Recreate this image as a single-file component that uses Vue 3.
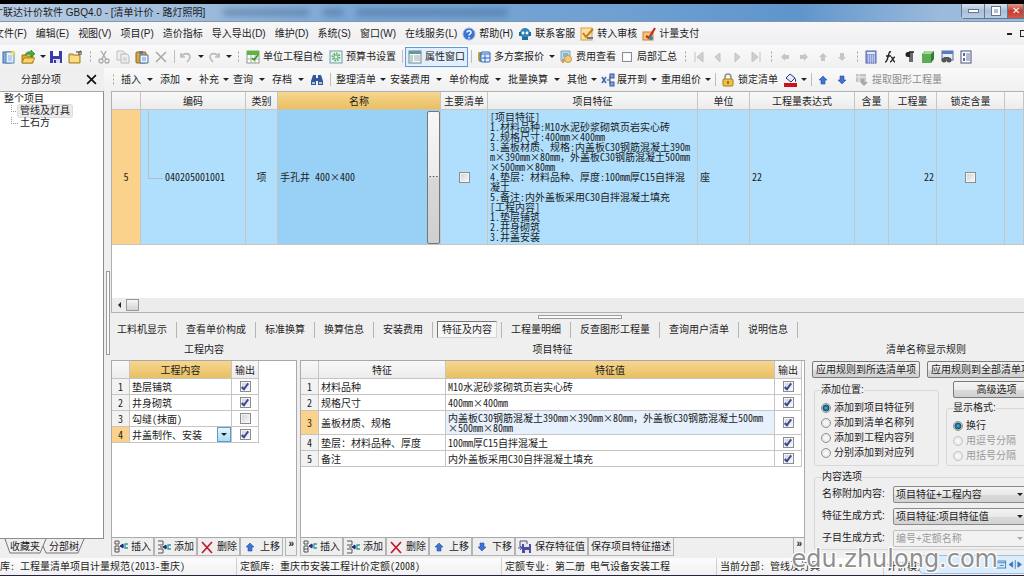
<template>
  <div class="app">
    <!-- 图标库 -->
    <svg class="sprite" aria-hidden="true">
      <symbol id="i-new" viewBox="0 0 14 14"><rect x="1" y="2" width="8" height="11" fill="#7fb0e0" stroke="#3f6da8" /><rect x="4" y="2" width="8" height="11" fill="#e4f0fb" stroke="#5b84b8" /><path d="M6 6h4M6 8h4M6 10h4" stroke="#8fb2d8" /><path d="M11 0l1 2 2 1-2 1-1 2-1-2-2-1 2-1z" fill="#f5d94e" /></symbol>
      <symbol id="i-open" viewBox="0 0 14 14"><path d="M1 5h4l1 1h6v7H1z" fill="#e0a82e" stroke="#a87716" /><path d="M3 8h11l-3 5H1z" fill="#f8d66c" stroke="#b3851d" /><path d="M4 5c1-3 4-4 6-3V0l4 4-4 3V5C8 4 6 4 4 5z" fill="#3fae3a" stroke="#23791f" stroke-width=".6" /></symbol>
      <symbol id="i-save" viewBox="0 0 14 14"><path d="M1 1h12v12H1z" fill="#3a3aa8" /><path d="M4 1h6v5H4z" fill="#fff" /><path d="M4 9h7v4H4z" fill="#dcdcf0" /><path d="M5 10h2v3H5z" fill="#3a3aa8" /></symbol>
      <symbol id="i-folder" viewBox="0 0 14 14"><path d="M1 4h4l1 1h6v8H1z" fill="#efc34f" stroke="#a5802a" /><path d="M2 6h9v6H2z" fill="#f9dc86" /><path d="M8 2h3v3M11 2l2-1v4" stroke="#333" fill="none" /></symbol>
      <symbol id="i-cut" viewBox="0 0 14 14"><path d="M4 1l5 8M9 1L5 9" stroke="#aaa" stroke-width="1.4" /><circle cx="4" cy="11" r="2" fill="none" stroke="#aaa" stroke-width="1.3" /><circle cx="10" cy="11" r="2" fill="none" stroke="#aaa" stroke-width="1.3" /></symbol>
      <symbol id="i-copy" viewBox="0 0 14 14"><path d="M1 1h6l2 2v7H1z" fill="#eee" stroke="#c0c0c0" /><path d="M5 4h6l2 2v7H5z" fill="#eee" stroke="#b8b8b8" /><path d="M7 8h4M7 10h4" stroke="#c4c4c4" /></symbol>
      <symbol id="i-paste" viewBox="0 0 14 14"><rect x="1" y="2" width="10" height="11" rx="1" fill="#d9a53c" stroke="#8c6a1e" /><rect x="4" y="1" width="4" height="3" fill="#777" /><path d="M5 5h8v8H5z" fill="#eaf2fc" stroke="#4a6fa8" /><path d="M7 8h4M7 10h4" stroke="#6e95cc" /></symbol>
      <symbol id="i-delgray" viewBox="0 0 14 14"><path d="M2 2l10 10M12 2L2 12" stroke="#a8a8a8" stroke-width="1.5" /></symbol>
      <symbol id="i-undo" viewBox="0 0 14 14"><path d="M2 3v4h4M2 7c3-5 9-4 9 0 0 2-1 3-3 5" fill="none" stroke="#bcbcbc" stroke-width="1.6" /></symbol>
      <symbol id="i-redo" viewBox="0 0 14 14"><path d="M12 3v4H8M12 7C9 2 3 3 3 7c0 2 1 3 3 5" fill="none" stroke="#bcbcbc" stroke-width="1.6" /></symbol>
      <symbol id="i-check" viewBox="0 0 14 14"><rect x="1" y="1" width="12" height="12" fill="#fff" stroke="#8a9a8a" /><path d="M1 1h12v4H1z" fill="#5fb53c" /><path d="M1 9h12M5 5v8M9 5v8" stroke="#9fb09f" /><path d="M6 8l2 2 4-5" fill="none" stroke="#2f8c1e" stroke-width="1.5" /></symbol>
      <symbol id="i-setting" viewBox="0 0 14 14"><rect x="1" y="1" width="12" height="12" fill="#e4f4ec" stroke="#6b9fb0" /><circle cx="7" cy="7" r="3.4" fill="none" stroke="#62b06a" stroke-width="2" stroke-dasharray="1.6 1" /><circle cx="7" cy="7" r="2" fill="none" stroke="#62b06a" /></symbol>
      <symbol id="i-prop" viewBox="0 0 14 14"><rect x="1" y="1" width="12" height="12" fill="#fff" stroke="#6f8494" /><path d="M1 1h12v3H1z" fill="#5c9aa8" /><path d="M2 5h3v7H2z" fill="#b9d8c4" /><path d="M6 6h6M6 8h6M6 10h6" stroke="#9aa8b0" /></symbol>
      <symbol id="i-multi" viewBox="0 0 14 14"><rect x="1" y="2" width="8" height="9" rx="1" fill="#e98f5a" /><rect x="2" y="3" width="9" height="9" rx="1" fill="#67b05a" /><rect x="4" y="2" width="9" height="10" rx="1" fill="#e6effb" stroke="#2f62c0" /><path d="M4 4h9M8 5v7M5 8h8" stroke="#2f62c0" /></symbol>
      <symbol id="i-fee" viewBox="0 0 14 14"><path d="M2 1h9v10H2z" fill="#b9d8ea" stroke="#7ea5bb" /><path d="M4 4h5M4 6h5" stroke="#5d8fb0" /><circle cx="9" cy="9" r="3.5" fill="#f1cd84" stroke="#c49a43" /><path d="M3 9h2v4H3z" fill="#d99b4b" /></symbol>
      <symbol id="i-first" viewBox="0 0 14 14"><path d="M3 2v10M11 2L5 7l6 5z" fill="#cfcfcf" stroke="#c2c2c2" /></symbol>
      <symbol id="i-prev" viewBox="0 0 14 14"><path d="M9 3L4 7l5 5z" fill="#cfcfcf" stroke="#c2c2c2" /></symbol>
      <symbol id="i-next" viewBox="0 0 14 14"><path d="M5 3l5 4-5 5z" fill="#cfcfcf" stroke="#c2c2c2" /></symbol>
      <symbol id="i-last" viewBox="0 0 14 14"><path d="M11 2v10M3 2l6 5-6 5z" fill="#cfcfcf" stroke="#c2c2c2" /></symbol>
      <symbol id="i-gleft" viewBox="0 0 14 14"><path d="M3 7l4-4v2h4v4H7v2z" fill="#c6c6c6" /></symbol>
      <symbol id="i-gright" viewBox="0 0 14 14"><path d="M11 7L7 3v2H3v4h4v2z" fill="#c6c6c6" /></symbol>
      <symbol id="i-gup" viewBox="0 0 14 14"><path d="M7 3l4 4H9v4H5V7H3z" fill="#c6c6c6" /></symbol>
      <symbol id="i-gdown" viewBox="0 0 14 14"><path d="M7 11l4-4H9V3H5v4H3z" fill="#c6c6c6" /></symbol>
      <symbol id="i-calc" viewBox="0 0 14 14"><rect x="2" y="1" width="10" height="12" fill="#8f9ddb" stroke="#5a67a8" /><path d="M3 2h8v2H3z" fill="#e3e8ff" /><path d="M4 6h7M4 8h7M4 10h7M4 12h7" stroke="#e9ecff" stroke-dasharray="1 1" /></symbol>
      <symbol id="i-fx" viewBox="0 0 14 14"><path d="M8 2c-2-1-2 2-3 5s-1 5-3 5M3 6h5M8 7c2 0 2 5 4 5M12 7c-2 0-3 5-5 5" fill="none" stroke="#222" stroke-width="1.4" /></symbol>
      <symbol id="i-para" viewBox="0 0 14 14"><path d="M7 2h5M8 2v10M10 2v10" stroke="#222" stroke-width="1.3" /><path d="M8 2H6a2.500 2.500 0 0 0 0 5h2z" fill="#222" /></symbol>
      <symbol id="i-cube" viewBox="0 0 14 14"><path d="M1 4l3-3h9v8l-3 4H1z" fill="#2f7d35" /><path d="M1 4h9v9H1z" fill="#5cab56" /><path d="M1 4l3-3h9l-3 3z" fill="#a3d79a" /></symbol>
      <symbol id="i-find" viewBox="0 0 14 14"><rect x="2" y="1" width="11" height="9" fill="#e8ecf8" stroke="#5b6ea8" /><path d="M2 1h11v3H2z" fill="#5b7ac4" /><circle cx="4" cy="10" r="2.500" fill="#555" /><circle cx="9" cy="10" r="2.500" fill="#555" /><path d="M4 8h5" stroke="#555" stroke-width="2" /></symbol>
      <symbol id="i-grid" viewBox="0 0 14 14"><rect x="2" y="1" width="10" height="12" fill="#fff" stroke="#4a5178" /><path d="M4 3h2v3H4zM4 8h2v3H4z" fill="#5d66a8" /><path d="M7 4h4M7 6h4M7 8h4M7 10h4" stroke="#6b74a8" /></symbol>
      <symbol id="i-binoc" viewBox="0 0 14 14"><path d="M3 2h3v3h2V2h3l2 6v4H8V8H6v4H1V8z" fill="#35569e" /><path d="M2 9h3v2H2zM9 9h3v2H9z" fill="#a8c2ee" /></symbol>
      <symbol id="i-expand" viewBox="0 0 14 14"><path d="M1 4l4 6M5 4L1 10" stroke="#3b6cc0" stroke-width="1.6" /><path d="M6 7h3M9 3v8" stroke="#444" /><rect x="9" y="1" width="4" height="4" fill="#7fa5e4" stroke="#3556a0" /><rect x="9" y="9" width="4" height="4" fill="#7fa5e4" stroke="#3556a0" /></symbol>
      <symbol id="i-lock" viewBox="0 0 14 14"><path d="M4 7V4a3 3 0 0 1 6 0v3" fill="none" stroke="#8f8f8f" stroke-width="1.500" /><rect x="2" y="6" width="10" height="7" rx="1" fill="#f0c04a" stroke="#a87f1d" /><path d="M7 8v3" stroke="#7d5d12" stroke-width="1.500" /></symbol>
      <symbol id="i-fill" viewBox="0 0 14 14"><path d="M3 5l4-4 5 4-4 4z" fill="#e8ecf8" stroke="#223a80" /><path d="M12 5c2 2 1 4 0 4z" fill="#223a80" /><path d="M1 10h13v4H1z" fill="#d01018" /></symbol>
      <symbol id="i-up" viewBox="0 0 14 14"><path d="M7 3l4 4H9v4H5V7H3z" fill="#3f72d8" stroke="#284f9f" stroke-width=".6" /></symbol>
      <symbol id="i-down" viewBox="0 0 14 14"><path d="M7 11l4-4H9V3H5v4H3z" fill="#3f72d8" stroke="#284f9f" stroke-width=".6" /></symbol>
      <symbol id="i-extract" viewBox="0 0 14 14"><path d="M1 1h10v8H1z" fill="#c4c4c4" /><path d="M1 4h10M4 1v8" stroke="#eee" /><path d="M6 6h3v3h4l-4 4-4-4h1z" fill="#a8a8a8" /></symbol>
      <symbol id="i-help" viewBox="0 0 14 14"><circle cx="7" cy="7" r="6" fill="#3e73cf" stroke="#94b5ea" /><path d="M5 5.500C5 3 9 3 9 5.500 9 7 7 7 7 8.500M7 10v1.500" fill="none" stroke="#fff" stroke-width="1.500" /></symbol>
      <symbol id="i-service" viewBox="0 0 14 14"><circle cx="7" cy="6" r="5" fill="#2f86b8" /><path d="M1 5h2v4H1zM11 5h2v4h-2zM4 10h6v3H4z" fill="#1f6d9c" /><circle cx="5" cy="6" r="1.400" fill="#fff" /><circle cx="9" cy="6" r="1.400" fill="#fff" /></symbol>
      <symbol id="i-audit" viewBox="0 0 14 14"><rect x="1" y="1" width="11" height="12" fill="#fbe2a2" stroke="#d9a13c" /><path d="M3 6l3 4 7-8" fill="none" stroke="#c87a1d" stroke-width="2" /><path d="M7 11h6" stroke="#557fb5" stroke-width="2" /></symbol>
      <symbol id="i-pay" viewBox="0 0 14 14"><rect x="1" y="5" width="10" height="8" fill="#f3c577" stroke="#c4862f" /><path d="M4 9l3 2 6-10" fill="none" stroke="#c32b23" stroke-width="2.200" /><circle cx="9" cy="11" r="2" fill="#3a82a8" /></symbol>
      <symbol id="i-insert" viewBox="0 0 14 14"><path d="M1 1h4v3H1zM1 6h4v6H1zM1 9h4" fill="none" stroke="#555" /><path d="M6 6l3-2v4zM8 6h2" fill="#1d2a80" stroke="#1d2a80" /><path d="M14 4h-3v4h3" fill="none" stroke="#2a9a98" stroke-width="1.300" /></symbol>
      <symbol id="i-append" viewBox="0 0 14 14"><path d="M1 1h5v4H1M1 9h5v4H1M6 7H3" fill="none" stroke="#555" /><path d="M6 7l3-2v4zM8 7h2" fill="#1d2a80" stroke="#1d2a80" /><path d="M14 5h-3v4h3" fill="none" stroke="#2a9a98" stroke-width="1.300" /></symbol>
      <symbol id="i-delete" viewBox="0 0 14 14"><path d="M2 2l10 11M12 2L2 13" stroke="#c01a2c" stroke-width="1.700" /></symbol>
      <symbol id="i-savefile" viewBox="0 0 14 14"><path d="M2 1h7v6H2z" fill="#e8e8f4" stroke="#556" /><path d="M4 4h9v9H4z" fill="#4d4d9e" /><path d="M6 4h5v3H6zM7 10h4v3H7z" fill="#e4e4f4" /><path d="M0 8h4M2 6l2 2-2 2" stroke="#335fb0" fill="none" /></symbol>
    </svg>

    <header class="titlebar">
      <h1 class="title">广联达计价软件 GBQ4.0 - [清单计价 - 路灯照明]</h1>
      <div class="glass"><i class="smudge"></i><i class="smudge short"></i><i class="smudge long"></i></div>
      <div class="win-btns">
        <button type="button" class="win-btn" aria-label="最小化"><span class="win-min"></span></button>
        <button type="button" class="win-btn" aria-label="还原"><span class="win-max"></span></button>
        <button type="button" class="win-btn win-close" aria-label="关闭">✕</button>
      </div>
    </header>

    <nav class="menubar">
      <button v-for="m in menus" :key="m.text" type="button" class="menu">
        <svg v-if="m.icon" class="ico"><use :href="'#i-' + m.icon" /></svg>{{ m.text }}
      </button>
      <span class="mdi"><span class="mdi-min"></span><span class="mdi-max"></span></span>
    </nav>

    <div class="toolbar">
      <template v-for="(t, i) in mainTools" :key="i">
        <span v-if="t.kind === 'grip'" class="grip"></span>
        <span v-else-if="t.kind === 'sep'" class="sep"></span>
        <label v-else-if="t.kind === 'check'" class="tool-check"><input type="checkbox" class="box light">{{ t.text }}</label>
        <button v-else type="button" :class="['tool', { 'icon-only': !t.text, active: t.active }]" :aria-label="t.text || t.icon">
          <svg v-if="t.icon" class="ico"><use :href="'#i-' + t.icon" /></svg>{{ t.text }}<span v-if="t.caret" class="caret"></span>
        </button>
      </template>
    </div>

    <div class="body">
      <aside class="side">
        <div class="side-head">
          <h2>分部分项</h2>
          <button type="button" class="side-close" aria-label="关闭面板">
            <svg viewBox="0 0 10 10"><path d="M1 1l8 8M9 1L1 9" stroke="#111" stroke-width="1.500" /></svg>
          </button>
        </div>
        <ul class="tree">
          <li>整个项目
            <ul>
              <li><span class="node selected">管线及灯具</span></li>
              <li><span class="node">土石方</span></li>
            </ul>
          </li>
        </ul>
        <div class="side-tabs">
          <svg class="side-tabs-line" viewBox="0 0 90 15"><path d="M5 0l5 14h30l6-14M43 7l3 7h32L84 0" fill="none" stroke="#777" /></svg>
          <button type="button">收藏夹</button>
          <button type="button">分部树</button>
        </div>
      </aside>

      <main class="work">
        <div class="toolbar sub">
          <template v-for="(t, i) in subTools" :key="i">
            <span v-if="t.kind === 'grip'" class="grip"></span>
            <span v-else-if="t.kind === 'sep'" class="sep"></span>
            <button v-else type="button" :class="['tool', { 'icon-only': !t.text, gray: t.gray }]" :aria-label="t.text || t.icon">
              <svg v-if="t.icon" class="ico"><use :href="'#i-' + t.icon" /></svg>{{ t.text }}<span v-if="t.caret" :class="['caret', { wide: t.wide }]"></span>
            </button>
          </template>
        </div>

        <div class="content">
          <div class="splitter"><span class="splitter-grip"></span></div>
          <div class="panes">
            <section class="bill">
              <table class="grid bill-grid">
                <colgroup>
                  <col class="w-no"><col class="w-code"><col class="w-kind"><col class="w-name"><col class="w-main"><col class="w-feat">
                  <col class="w-unit"><col class="w-expr"><col class="w-cont"><col class="w-qty"><col class="w-lock"><col>
                </colgroup>
                <thead>
                  <tr><th v-for="(h, i) in billHeads" :key="i" :class="{ hot: h === '名称' }">{{ h }}</th></tr>
                </thead>
                <tbody>
                  <tr>
                    <td class="no hot">5</td>
                    <td class="code"><div class="branch"><span class="branch-line"></span><span>040205001001</span></div></td>
                    <td class="center">项</td>
                    <td class="name"><div class="edit"><span>手孔井 400×400</span><button type="button" aria-label="编辑名称">⋯</button></div></td>
                    <td class="center"><input type="checkbox" class="box" aria-label="主要清单"></td>
                    <td class="feature"><template v-for="(s, i) in featureText.split('，')" :key="i"><span v-if="i" class="full">，</span>{{ s }}</template></td>
                    <td>座</td>
                    <td>22</td>
                    <td></td>
                    <td class="right">22</td>
                    <td class="center"><input type="checkbox" class="box" aria-label="锁定含量"></td>
                    <td></td>
                  </tr>
                </tbody>
              </table>
              <div class="hscroll"><span class="hscroll-arrow"></span><span class="hscroll-thumb"></span></div>
            </section>

            <div class="hsplit"><span class="hsplit-grip"></span></div>

            <div class="tabs">
              <div v-for="t in tabs" :key="t" class="tab-cell">
                <button type="button" :class="['tab', { active: t === activeTab }]" @click="activeTab = t">{{ t }}</button>
              </div>
            </div>

            <div class="details">
              <section class="panel">
                <h3>工程内容</h3>
                <div class="table-box">
                  <table class="grid content-grid">
                    <colgroup><col class="w-idx"><col><col class="w-out"></colgroup>
                    <thead><tr><th></th><th class="hot">工程内容</th><th>输出</th></tr></thead>
                    <tbody>
                      <tr v-for="(r, i) in works" :key="r.text">
                        <td :class="['no', { hot: i === 3 }]">{{ i + 1 }}</td>
                        <td><div class="combo"><span>{{ r.text }}</span><button v-if="i === 3" type="button" aria-label="展开列表"><i class="caret-tip"></i></button></div></td>
                        <td class="center out"><input v-model="r.out" type="checkbox" class="box" :aria-label="r.text"></td>
                      </tr>
                    </tbody>
                  </table>
                </div>
                <div class="actions">
                  <button v-for="a in actions.slice(0, 4)" :key="a.text" type="button"><svg class="ico"><use :href="'#i-' + a.icon" /></svg>{{ a.text }}</button>
                  <button type="button" class="more" aria-label="更多">»</button>
                </div>
              </section>

              <section class="panel">
                <h3>项目特征</h3>
                <div class="table-box">
                  <table class="grid feature-grid">
                    <colgroup><col class="w-idx"><col class="w-key"><col><col class="w-out"></colgroup>
                    <thead><tr><th></th><th>特征</th><th class="hot">特征值</th><th>输出</th></tr></thead>
                    <tbody>
                      <tr v-for="(f, i) in features" :key="f.name" :class="{ current: i === 2 }">
                        <td :class="['no', { hot: i === 2 }]">{{ i + 1 }}</td>
                        <td>{{ f.name }}</td>
                        <td class="value"><template v-for="(s, j) in f.value.split('，')" :key="j"><span v-if="j" class="full">，</span>{{ s }}</template></td>
                        <td class="center out"><input v-model="f.out" type="checkbox" class="box" :aria-label="f.name"></td>
                      </tr>
                    </tbody>
                  </table>
                </div>
                <div class="actions">
                  <button v-for="a in actions" :key="a.text" type="button"><svg v-if="a.icon" class="ico"><use :href="'#i-' + a.icon" /></svg>{{ a.text }}</button>
                  <button type="button" class="more" aria-label="更多">»</button>
                </div>
              </section>

              <section class="rules">
                <h3>清单名称显示规则</h3>
                <div class="rules-btns">
                  <button type="button" class="btn">应用规则到所选清单项</button>
                  <button type="button" class="btn">应用规则到全部清单项</button>
                </div>
                <div class="rules-cols">
                  <fieldset>
                    <legend>添加位置:</legend>
                    <label v-for="p in positions" :key="p" class="radio"><input v-model="position" type="radio" name="position" :value="p">{{ p }}</label>
                  </fieldset>
                  <div class="format">
                    <button type="button" class="btn">高级选项</button>
                    <fieldset>
                      <legend>显示格式:</legend>
                      <label class="radio"><input type="radio" name="format" checked>换行</label>
                      <label class="radio disabled"><input type="radio" name="format" disabled>用逗号分隔</label>
                      <label class="radio disabled"><input type="radio" name="format" disabled>用括号分隔</label>
                    </fieldset>
                  </div>
                </div>
                <fieldset class="options">
                  <legend>内容选项</legend>
                  <div v-for="o in options" :key="o.label" class="option">
                    <label :for="o.id">{{ o.label }}</label>
                    <div :class="['select', { disabled: o.disabled }]">
                      <select :id="o.id" :disabled="o.disabled"><option>{{ o.value }}</option></select>
                      <i class="caret-tip"></i>
                    </div>
                  </div>
                </fieldset>
              </section>
            </div>
          </div>
        </div>
      </main>
    </div>

    <footer class="status">
      <span class="s-lib">库: 工程量清单项目计量规范(2013-重庆)</span>
      <span class="s-quota">定额库: 重庆市安装工程计价定额(2008)</span>
      <span class="s-major">定额专业: 第二册 电气设备安装工程</span>
      <span class="s-part">当前分部: 管线及灯具</span>
      <span class="s-mode">计价模式</span>
    </footer>
    <div class="langbar">
      <svg viewBox="0 0 32 12"><rect x="1" y="2" width="10" height="8" fill="none" stroke="#3a78b8" /><path d="M1 4h10M4 7h5" stroke="#3a78b8" /><path d="M22 1v10M15 6l4-3v6zM29 6l-4-3v6z" fill="#3a78b8" stroke="#3a78b8" /></svg>
    </div>
    <div class="watermark">edu.zhulong.com</div>
  </div>
</template>

<script setup>
import { ref } from 'vue'

const grip = { kind: 'grip' }
const sep = { kind: 'sep' }

const menus = [
  { text: '文件(F)' },
  { text: '编辑(E)' },
  { text: '视图(V)' },
  { text: '项目(P)' },
  { text: '造价指标' },
  { text: '导入导出(D)' },
  { text: '维护(D)' },
  { text: '系统(S)' },
  { text: '窗口(W)' },
  { text: '在线服务(L)' },
  { text: '帮助(H)', icon: 'help' },
  { text: '联系客服', icon: 'service' },
  { text: '转入审核', icon: 'audit' },
  { text: '计量支付', icon: 'pay' }
]

const mainTools = [
  { icon: 'new' }, { icon: 'open', caret: true }, { icon: 'save' }, { icon: 'folder' },
  grip,
  { icon: 'cut' }, { icon: 'copy' }, { icon: 'paste' }, { icon: 'delgray' },
  sep,
  { icon: 'undo', caret: true }, { icon: 'redo', caret: true },
  grip,
  { icon: 'check', text: '单位工程自检' },
  { icon: 'setting', text: '预算书设置' },
  sep,
  { icon: 'prop', text: '属性窗口', active: true },
  sep,
  { icon: 'multi', text: '多方案报价', caret: true },
  { icon: 'fee', text: '费用查看' },
  { kind: 'check', text: '局部汇总' },
  grip,
  { icon: 'first' }, { icon: 'prev' }, { icon: 'next' }, { icon: 'last' },
  grip,
  { icon: 'gleft' }, { icon: 'gright' }, { icon: 'gup' }, { icon: 'gdown' },
  grip,
  { icon: 'calc' }, { icon: 'fx' }, { icon: 'para' }, { icon: 'cube' }, { icon: 'find' }, { icon: 'grid' }
]

const subTools = [
  grip,
  { text: '插入', caret: true, wide: true },
  { text: '添加', caret: true, wide: true },
  { text: '补充', caret: true },
  { text: '查询', caret: true, wide: true },
  { text: '存档', caret: true, wide: true },
  { icon: 'binoc' },
  sep,
  { text: '整理清单', caret: true },
  { text: '安装费用', caret: true, wide: true },
  { text: '单价构成', caret: true, wide: true },
  { text: '批量换算', caret: true, wide: true },
  { text: '其他', caret: true },
  { icon: 'expand', text: '展开到', caret: true },
  { text: '重用组价', caret: true },
  sep,
  { icon: 'lock', text: '锁定清单' },
  { icon: 'fill', caret: true },
  sep,
  { icon: 'up' }, { icon: 'down' },
  { icon: 'extract', text: '提取图形工程量', gray: true }
]

const billHeads = ['', '编码', '类别', '名称', '主要清单', '项目特征', '单位', '工程量表达式', '含量', '工程量', '锁定含量', '']

const featureText = [
  '[项目特征]',
  '1.材料品种:M10水泥砂浆砌筑页岩实心砖',
  '2.规格尺寸:400mm×400mm',
  '3.盖板材质、规格:内盖板C30钢筋混凝土390m',
  'm×390mm×80mm，外盖板C30钢筋混凝土500mm',
  '×500mm×80mm',
  '4.垫层：材料品种、厚度:100mm厚C15自拌混',
  '凝土',
  '5.备注:内外盖板采用C30自拌混凝土填充',
  '[工程内容]',
  '1.垫层铺筑',
  '2.井身砌筑',
  '3.井盖安装'
].join('\n')

const tabs = ['工料机显示', '查看单价构成', '标准换算', '换算信息', '安装费用', '特征及内容', '工程量明细', '反查图形工程量', '查询用户清单', '说明信息']
const activeTab = ref('特征及内容')

const works = ref([
  { text: '垫层铺筑', out: true },
  { text: '井身砌筑', out: true },
  { text: '勾缝(抹面)', out: false },
  { text: '井盖制作、安装', out: true }
])

const features = ref([
  { name: '材料品种', value: 'M10水泥砂浆砌筑页岩实心砖', out: true },
  { name: '规格尺寸', value: '400mm×400mm', out: true },
  { name: '盖板材质、规格', value: '内盖板C30钢筋混凝土390mm×390mm×80mm，外盖板C30钢筋混凝土500mm\n×500mm×80mm', out: true },
  { name: '垫层：材料品种、厚度', value: '100mm厚C15自拌混凝土', out: true },
  { name: '备注', value: '内外盖板采用C30自拌混凝土填充', out: true }
])

const actions = [
  { icon: 'insert', text: '插入' },
  { icon: 'append', text: '添加' },
  { icon: 'delete', text: '删除' },
  { icon: 'up', text: '上移' },
  { icon: 'down', text: '下移' },
  { icon: 'savefile', text: '保存特征值' },
  { text: '保存项目特征描述' }
]

const positions = ['添加到项目特征列', '添加到清单名称列', '添加到工程内容列', '分别添加到对应列']
const position = ref('添加到项目特征列')

const options = [
  { id: 'opt-name', label: '名称附加内容:', value: '项目特征+工程内容' },
  { id: 'opt-feature', label: '特征生成方式:', value: '项目特征:项目特征值' },
  { id: 'opt-sub', label: '子目生成方式:', value: '编号+定额名称', disabled: true }
]
</script>

<style>
body {
  margin: 0;
  overflow-x: hidden;
}
</style>

<style scoped>
.app {
  position: relative;
  display: flex;
  flex-direction: column;
  min-height: 100vh;
  box-sizing: border-box;
  overflow: hidden;
  border-top: 4px solid #000;
  border-bottom: 1px solid #23233c;
  background: #f0eff0;
  color: #1c1c1c;
  font-family: "Liberation Sans", "Noto Sans CJK SC", sans-serif;
  font-size: 10px;
  line-height: 12px;
}

.sprite {
  position: absolute;
  width: 0;
  height: 0;
}

button {
  font: inherit;
  color: inherit;
  padding: 0;
  border: none;
  background: none;
  white-space: nowrap;
}

h1, h2, h3 {
  margin: 0;
  font-size: 10px;
  font-weight: normal;
}

.ico {
  width: 14px;
  height: 14px;
  flex: none;
}

/* 标题栏 */
.titlebar {
  display: flex;
  align-items: center;
  height: 18px;
  box-sizing: border-box;
  border-bottom: 1px solid #8297ad;
  background: linear-gradient(90deg, #b9cde3 0, #9fbddc 18%, #79a6d4 35%, #6fa0d2 60%, #5f95cc 78%, #9cbbdc 92%);
}

.title {
  margin-left: -7px;
  white-space: nowrap;
}

.glass {
  flex: 1;
  display: flex;
  gap: 14px;
  padding-left: 18px;
}

.smudge {
  width: 86px;
  height: 7px;
  background: #3b5f88;
  opacity: 0.45;
  filter: blur(3px);
}

.smudge.short {
  width: 20px;
}

.smudge.long {
  width: 150px;
}

.win-btns {
  display: flex;
  align-self: flex-start;
  height: 14px;
  border: 1px solid #5f7792;
  border-top: none;
  border-right: none;
  border-radius: 0 0 0 4px;
}

.win-btn {
  display: flex;
  align-items: center;
  justify-content: center;
  width: 23px;
  border-right: 1px solid #5f7792;
  background: linear-gradient(#d6e2ef, #a9bfd6 50%, #b9cde0);
}

.win-min {
  width: 9px;
  height: 2px;
  border: 1px solid #65758a;
  background: #fff;
}

.win-max {
  width: 4px;
  height: 4px;
  border: 2px solid #fff;
  outline: 1px solid #65758a;
}

.win-close {
  width: 16px;
  color: #fff;
  background: linear-gradient(#e09a90, #c83a2c 50%, #d25a48);
}

/* 菜单栏 */
.menubar {
  display: flex;
  align-items: center;
  gap: 9px;
  height: 23px;
  background: linear-gradient(#f7f7f8, #efeff1);
}

.menu {
  display: flex;
  align-items: center;
  gap: 3px;
}

.menu:first-child {
  margin-left: -6px;
}

.menu:has(.ico) {
  margin-left: -4px;
}

.mdi {
  display: flex;
  align-items: center;
  gap: 8px;
  margin-left: auto;
}

.mdi-min {
  width: 5px;
  height: 2px;
  background: #222;
}

.mdi-max {
  width: 3px;
  height: 5px;
  border: 1px solid #222;
  border-right: none;
}

/* 工具栏 */
.toolbar {
  display: flex;
  align-items: center;
  height: 23px;
  background: linear-gradient(#fafafa, #f0f0f1);
}

.toolbar.sub {
  padding-left: 4px;
}

.tool {
  display: flex;
  align-items: center;
  gap: 3px;
  flex: none;
  height: 20px;
  padding: 0 3px;
  box-sizing: border-box;
}

.tool:has(.caret) {
  padding-right: 0;
}

.sub .tool:has(.caret) {
  gap: 2px;
}

.icon-only {
  min-width: 19px;
  padding: 0 2px;
}

.tool.active {
  border: 1px solid #5b9be0;
  padding: 0 2px;
  background: #e3effc;
}

.tool.gray {
  color: #8c8c8c;
}

.caret {
  display: flex;
  justify-content: center;
  width: 9px;
}

.caret.wide {
  width: 14px;
}

.caret::after,
.caret-tip {
  content: "";
  border: 3px solid transparent;
  border-top-color: #222;
  border-bottom: none;
}

.grip {
  flex: none;
  width: 10px;
  height: 13px;
  background: radial-gradient(circle, #a5a5a5 1px, transparent 1px) center / 3px 4px no-repeat;
  background-repeat: no-repeat repeat;
}

.sep {
  flex: none;
  width: 6px;
  height: 13px;
  background: linear-gradient(#bdbdbd, #bdbdbd) center / 1px 100% no-repeat;
}

.tool-check {
  display: flex;
  align-items: center;
  gap: 5px;
  padding: 0 3px;
}

.box {
  display: inline-flex;
  align-items: center;
  justify-content: center;
  appearance: none;
  width: 11px;
  height: 11px;
  margin: 0;
  box-sizing: border-box;
  border: 1px solid #8a8d92;
  background: linear-gradient(135deg, #cfd0d4, #fbfbfb);
  box-shadow: inset 0 0 0 1px #f4f4f4;
  vertical-align: middle;
}

.box.light {
  width: 10px;
  height: 10px;
  background: #fff;
}

.box:checked::after {
  content: "";
  width: 2px;
  height: 6px;
  margin-bottom: 2px;
  border: solid #40489a;
  border-width: 0 2px 2px 0;
  transform: rotate(38deg);
}

/* 左侧树 */
.body {
  flex: 1;
  display: flex;
}

.side {
  flex: none;
  width: 104px;
  display: flex;
  flex-direction: column;
}

.side-head {
  display: flex;
  align-items: center;
  justify-content: space-between;
  height: 23px;
  padding: 0 7px 0 21px;
}

.side-close svg {
  display: block;
  width: 11px;
  height: 11px;
}

.tree {
  flex: 1;
  margin: 0;
  padding: 1px 0 0 4px;
  list-style: none;
  border: 1px solid #8d8d8d;
  border-left: none;
  border-top-color: #a8a8a8;
  background: #fff;
}

.tree ul {
  margin: 0;
  padding: 0 0 0 7px;
  list-style: none;
}

.tree ul li {
  display: flex;
  align-items: center;
  height: 12px;
}

.tree ul li::before {
  content: "";
  align-self: flex-start;
  width: 6px;
  height: 6px;
  border-left: 1px dotted #999;
  border-bottom: 1px dotted #999;
}

.node {
  padding: 0 2px;
}

.node.selected {
  border-radius: 2px;
  background: #ebebeb;
  box-shadow: 0 0 0 1px #dcdcdc;
}

.side-tabs {
  position: relative;
  display: flex;
  gap: 9px;
  height: 15px;
  margin-bottom: 4px;
  padding-left: 10px;
}

.side-tabs-line {
  position: absolute;
  left: 0;
  top: 0;
  width: 90px;
  height: 15px;
}

/* 主工作区 */
.work {
  flex: 1;
  min-width: 0;
  display: flex;
  flex-direction: column;
}

.content {
  flex: 1;
  display: flex;
  min-width: 0;
}

.splitter {
  flex: none;
  width: 7px;
  display: flex;
  align-items: center;
  justify-content: center;
  padding-bottom: 24px;
}

.splitter-grip {
  width: 2px;
  height: 82px;
  border: 1px solid #9c9c9c;
  background: #fafafa;
}

.panes {
  flex: 1;
  min-width: 0;
  display: flex;
  flex-direction: column;
}

.bill {
  display: flex;
  flex-direction: column;
  justify-content: space-between;
  min-height: 222px;
  box-sizing: border-box;
  border: 1px solid #b0b0b0;
  border-right: none;
  background: #fff;
}

.grid {
  width: 100%;
  table-layout: fixed;
  border-collapse: separate;
  border-spacing: 0;
  font-family: "Noto Sans CJK SC", sans-serif;
  font-feature-settings: "hwid";
}

/* 全角逗号保持整字宽 */
.full {
  font-feature-settings: normal;
}

.grid th,
.grid td {
  box-sizing: border-box;
  padding: 0 2px;
  border-right: 1px solid #c8c4c0;
  border-bottom: 1px solid #c8c4c0;
  font-weight: normal;
  text-align: left;
  white-space: nowrap;
}

.grid th {
  height: 18px;
  padding: 0;
  text-align: center;
  background: linear-gradient(#f8f8f8, #ececec);
}

.grid th.hot {
  background: linear-gradient(#f6d68f, #e9bf62);
}

.grid .no {
  padding: 0;
  text-align: center;
  background: #f3f2f2;
}

.grid .no.hot {
  background: #fbd28b;
}

.grid .center {
  padding: 0;
  text-align: center;
}

.grid .right {
  text-align: right;
}

.w-no { width: 29px; }
.w-code { width: 105px; }
.w-kind { width: 32px; }
.w-name { width: 163px; }
.w-main { width: 47px; }
.w-feat { width: 210px; }
.w-unit { width: 52px; }
.w-expr { width: 105px; }
.w-cont { width: 34px; }
.w-qty { width: 48px; }
.w-lock { width: 68px; }
.w-idx { width: 18px; }
.w-out { width: 27px; }
.w-key { width: 127px; }

.bill-grid td {
  background: #afdffc;
}

.bill-grid .name {
  padding: 0;
  background: #99d1f6;
}

.bill-grid .code {
  padding: 0 0 0 7px;
}

.bill-grid .feature {
  padding: 2px;
  line-height: 10px;
  white-space: pre;
}

.branch {
  display: flex;
  align-items: center;
  gap: 2px;
  height: 133px;
}

.branch-line {
  align-self: flex-start;
  width: 14px;
  height: 67px;
  border-left: 1px solid #b7bcc0;
  border-bottom: 1px solid #b7bcc0;
}

.edit {
  display: flex;
  align-items: center;
  justify-content: space-between;
  height: 133px;
  padding-left: 2px;
}

.edit button {
  width: 13px;
  height: 133px;
  border: 1px solid #767676;
  border-radius: 2px;
  background: linear-gradient(#f7f7f7, #ebebeb 50%, #d8d8d8 51%, #cfcfcf);
}

.hscroll {
  display: flex;
  align-items: center;
  gap: 5px;
  height: 14px;
  padding-left: 6px;
  background: #ececec;
}

.hscroll-arrow {
  border: 3px solid transparent;
  border-right-color: #222;
  border-left: none;
}

.hscroll-thumb {
  width: 11px;
  height: 10px;
  border: 1px solid #979797;
  background: linear-gradient(#f6f6f6, #d4d4d4);
}

.hsplit {
  display: flex;
  align-items: center;
  justify-content: center;
  height: 7px;
  padding-left: 24px;
}

.hsplit-grip {
  width: 82px;
  height: 2px;
  border: 1px solid #9c9c9c;
  background: #fafafa;
}

/* 页签 */
.tabs {
  display: flex;
  height: 19px;
  margin-left: -3px;
}

.tab-cell {
  display: flex;
  align-items: center;
  padding: 0 5px 0 4px;
  background: linear-gradient(#b5b5b5, #b5b5b5) right center / 1px 16px no-repeat;
}

.tab {
  height: 17px;
  padding: 0 4px;
  border: 1px solid transparent;
}

.tab.active {
  border-color: #777 #d5d5d5 #d5d5d5 #777;
  background: #f8f8f8;
}

/* 下方明细 */
.details {
  flex: 1;
  display: grid;
  grid-template-columns: 186px minmax(0, 1fr) 212px;
  column-gap: 3px;
}

.panel {
  display: flex;
  flex-direction: column;
  min-width: 0;
}

.panel + .panel {
  margin-right: 4px;
}

.panel h3,
.rules h3 {
  line-height: 21px;
  text-align: center;
}

.table-box {
  flex: 1;
  border: 1px solid #a9a9a9;
  border-bottom: none;
  background: #fff;
}

.content-grid {
  width: 147px;
}

.feature-grid {
  width: calc(100% - 2px);
}

.table-box .grid td {
  height: 16px;
  line-height: 10px;
}

.table-box .grid .value {
  white-space: pre;
}

.table-box .grid .out {
  line-height: 0;
}

.table-box .grid .current td {
  height: 24px;
}

.grid .current .value {
  background: #e6f1fd;
}

.combo {
  display: flex;
  align-items: center;
  justify-content: space-between;
}

.combo button {
  display: flex;
  align-items: center;
  justify-content: center;
  width: 14px;
  height: 15px;
  margin-right: -2px;
  box-sizing: border-box;
  border: 1px solid #5c9cc8;
  background: linear-gradient(#e6f5fd, #a9dcf6);
}

.actions {
  display: flex;
  height: 18px;
  margin-bottom: 2px;
  border-top: 1px solid #a9a9a9;
}

.actions button {
  display: flex;
  align-items: center;
  gap: 3px;
  padding: 0 2px;
  border: 1px solid #b4b4b4;
  border-top: none;
}

.actions .more {
  align-items: flex-start;
  margin-left: auto;
  font-weight: bold;
}

/* 显示规则 */
.rules {
  width: 228px;
}

.rules-btns {
  display: flex;
  gap: 7px;
  padding-top: 1px;
}

.btn {
  height: 17px;
  padding: 0 3px;
  border: 1px solid #7a7a7a;
  border-radius: 2px;
  background: linear-gradient(#f4f4f4, #ebebeb 50%, #dcdcdc 51%, #d0d0d0);
}

.rules-cols {
  display: flex;
  gap: 7px;
  padding: 6px 0 0 2px;
}

fieldset {
  margin: 0;
  min-width: 0;
  padding: 4px 4px 2px 6px;
  box-sizing: border-box;
  border: 1px solid #d8d8d8;
  border-radius: 3px;
}

.rules-cols > fieldset {
  width: 125px;
}

legend {
  height: 12px;
  padding: 0;
}

.format {
  flex: 1;
  display: flex;
  flex-direction: column;
  gap: 4px;
  margin-top: -3px;
}

.format .btn {
  margin-left: 7px;
}

.radio {
  display: flex;
  align-items: center;
  gap: 3px;
  height: 15px;
  white-space: nowrap;
}

.radio input {
  appearance: none;
  width: 10px;
  height: 10px;
  margin: 0;
  box-sizing: border-box;
  border: 1px solid #8c9094;
  border-radius: 50%;
  background: radial-gradient(circle, #fdfdfd, #dedede);
}

.radio input:checked {
  background: radial-gradient(circle, #4fb4d4 0, #14506e 3px, #eef2f4 4px);
}

.radio.disabled {
  color: #9a9a9a;
}

.radio.disabled input {
  border-color: #c4c4c4;
}

.options {
  width: 226px;
  margin: 5px 0 0 2px;
  padding: 0 10px 0 7px;
}

.option {
  display: flex;
  align-items: center;
  gap: 7px;
  height: 22px;
}

.option label {
  width: 64px;
}

.select {
  flex: 1;
  display: flex;
  align-items: center;
  height: 17px;
  box-sizing: border-box;
  padding-right: 5px;
  border: 1px solid #8a8a8a;
  border-radius: 2px;
  background: linear-gradient(#f4f4f4, #e9e9e9 50%, #dadada 51%, #d2d2d2);
}

.select select {
  flex: 1;
  min-width: 0;
  appearance: none;
  padding: 0 2px;
  border: none;
  background: none;
  color: inherit;
  font: inherit;
  line-height: 15px;
  opacity: 1;
}

.select.disabled {
  color: #9a9a9a;
  border-color: #c0c0c0;
  background: #f2f2f2;
}

.select.disabled .caret-tip {
  border-top-color: #aaa;
}

/* 状态栏 */
.status {
  display: flex;
  height: 17px;
  line-height: 16px;
  background: linear-gradient(#fcfcfc, #f1f1f1);
  font-family: "Noto Sans CJK SC", sans-serif;
  font-feature-settings: "hwid";
}

.status span {
  flex: none;
  box-sizing: border-box;
  padding-left: 3px;
  border-left: 1px solid #d0d0d0;
  white-space: nowrap;
}

.status .s-lib {
  width: 236px;
  padding-left: 0;
  border-left: none;
}

.s-quota { width: 265px; }
.s-major { width: 215px; }
.s-part { width: 167px; }

.langbar {
  position: absolute;
  right: 0;
  bottom: 1px;
  width: 105px;
  height: 19px;
  box-sizing: border-box;
  display: flex;
  align-items: center;
  justify-content: flex-end;
  border: 1px solid #9cc0e2;
  border-right: none;
  border-radius: 5px 0 0 5px;
  background: #dcecfa;
}

.langbar svg {
  width: 28px;
  height: 11px;
}

.watermark {
  position: absolute;
  right: 26px;
  bottom: 3px;
  color: #8f8f8f;
  font-family: "DejaVu Sans", sans-serif;
  font-size: 24px;
  line-height: 26px;
  text-shadow: -1px -1px 0 #fff, 1px -1px 0 #fff, -1px 1px 0 #fff, 1px 1px 0 #fff, 0 0 3px #fff;
}
</style>
